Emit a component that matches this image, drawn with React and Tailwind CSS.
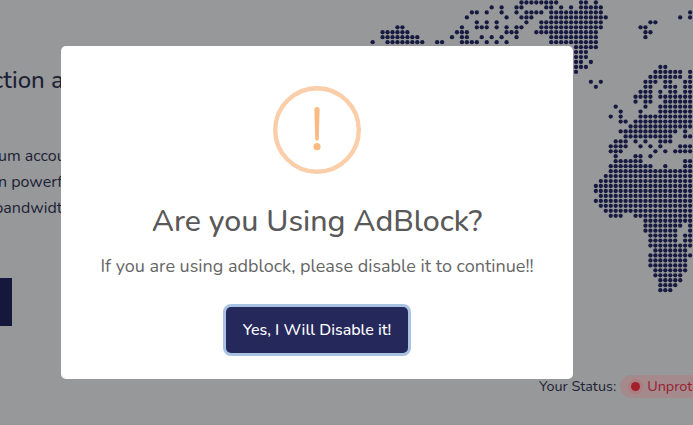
const mapRows = {
  0: "36-43 48-49 51",
  1: "30 32 35-36 41-42 44 46 48-52",
  2: "26-27 29 32 35 37-40 42-52 70",
  3: "25 33 36-38 42-53 68 70",
  4: "27 29 31 37 40-52 62-63",
  5: "11-12 24 27-29 31 33 35-36 40-52 60-61",
  6: "8-13 23-25 33-35 39-51 61-62",
  7: "8-15 22 24-25 28 30 32 35 42-51 61",
  8: "6 9-16 19-20 24-27 29 31 33 42-51",
  9: "47-51",
  10: "47-49",
  11: "47-49",
  12: "47-48 50",
  13: "47-49 64-65",
  14: "47 63-68 70",
  15: "62-68 70",
  16: "50 52 61-63 65-66 69-70",
  17: "51 61-62 65-67 69-70",
  18: "60-62 64 66-67 69-70",
  19: "59-62 64-70",
  20: "59 61-62 65-70",
  21: "55 61 64-70",
  22: "56 60 64-70",
  23: "54 56 60-70",
  24: "56-57 59-70",
  25: "58-70",
  26: "56-67 69",
  27: "57-66 69-70",
  28: "55-57 59 61 64-66",
  29: "54-57 60 62 64 68-70",
  30: "54-56 63 65 67-70",
  31: "55 59-60 62",
  32: "55-60 69-70",
  33: "54-62 65 69-70",
  34: "54-70",
  35: "53-70",
  36: "52-70",
  37: "51-70",
  38: "51-70",
  39: "52-70",
  40: "51-70",
  41: "52-70",
  42: "53-70",
  43: "54-56 59-70",
  44: "61-70",
  45: "61-68 70",
  46: "61-67 70",
  47: "62-67 69-70",
  48: "62-67 69-70",
  49: "62-70",
  50: "63-69",
  51: "62-70",
  52: "62-69",
  53: "62-69",
  54: "63-69",
  55: "63-68",
  56: "64-68",
  57: "64-67",
  58: "64-66",
};

function getDots() {
  const dots = [];
  Object.entries(mapRows).forEach(([row, ranges]) => {
    ranges.split(" ").forEach((range) => {
      const [from, to] = range.split("-").map(Number);
      for (let col = from; col <= (to ?? from); col++) {
        dots.push([342.9 + col * 4.96, 2.5 + row * 4.96]);
      }
    });
  });
  return dots;
}

function WorldMap() {
  return (
    <svg className="absolute inset-0" width="693" height="425" fill="#171a40">
      {getDots().map(([x, y]) => (
        <circle key={x + "-" + y} cx={x} cy={y} r="2.15" />
      ))}
    </svg>
  );
}

function WarningIcon() {
  return (
    <svg width="88" height="88" viewBox="0 0 88 88">
      <circle cx="44" cy="44" r="41.8" fill="none" stroke="#facea8" strokeWidth="4.4" />
      <path d="M41.4 23.5a2.6 2.6 0 0 1 5.2 0L45.8 53a1.8 1.8 0 0 1-3.6 0z" fill="#f8bb86" />
      <circle cx="44" cy="60.7" r="3.6" fill="#f8bb86" />
    </svg>
  );
}

export default function App() {
  return (
    <div className="relative h-[425px] w-[693px] overflow-hidden bg-[#97989a] font-['Nunito','Noto_Sans',sans-serif] text-[#1d2235]">
      <WorldMap />

      <div className="relative flex h-full flex-col">
        <h2 className="mt-[65px] -ml-2 whitespace-nowrap text-2xl leading-[30px] font-medium">ction and</h2>
        <div className="mt-[48px] text-base leading-[26px] whitespace-nowrap">
          <p className="-ml-0.5">um accounts</p>
          <p className="-ml-0.5">n powerful</p>
          <p className="-ml-1.5">bandwidth</p>
        </div>
        <div className="mt-[57px] h-12 w-3 bg-[#15183c]" />
        <div className="mt-[49px] ml-[539px] flex items-center gap-[4px] text-[14.4px] whitespace-nowrap">
          <span>Your Status:</span>
          <div className="flex h-[23px] items-center gap-[7px] rounded-l-full bg-[#a48a8c] pr-8 pl-[11px] text-[#98202e]">
            <span className="h-[9px] w-[9px] rounded-full bg-[#a31f2a] ring-[3px] ring-[#ad7d80]" />
            <span>Unprotected</span>
          </div>
        </div>
      </div>

      <div className="absolute inset-0 pt-[46px] pl-[61px]">
        <div className="flex h-[333px] w-[512px] flex-col items-center rounded-[5px] bg-white pt-10 text-[#595959]">
          <WarningIcon />
          <h1 className="mt-[29px] text-[30.3px] leading-9 font-medium">Are you Using AdBlock?</h1>
          <p className="mt-[15px] text-[18px] leading-6 text-[#666]">
            If you are using adblock, please disable it to continue!!
          </p>
          <button className="mt-[29px] h-[46px] rounded-[5px] bg-[#25285b] px-[17px] text-base font-medium text-white ring-[3px] ring-[#a9c3e3]">
            Yes, I Will Disable it!
          </button>
        </div>
      </div>
    </div>
  );
}
